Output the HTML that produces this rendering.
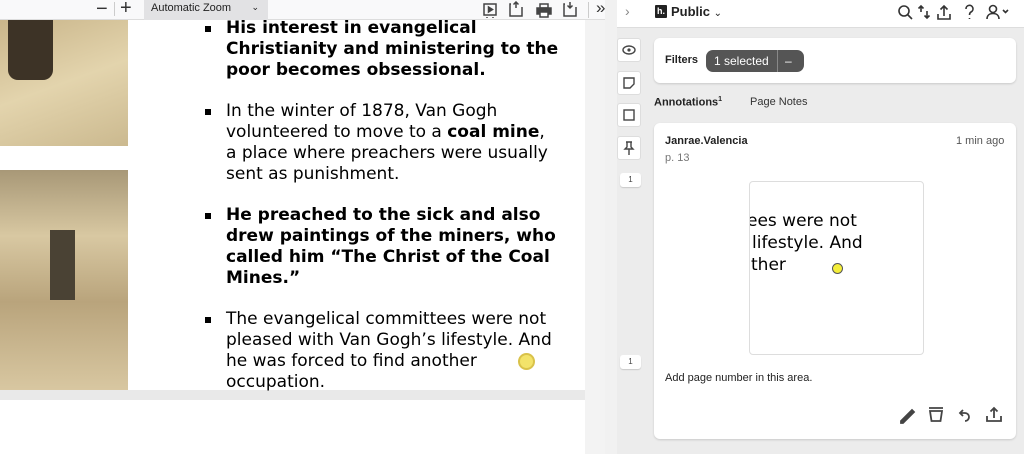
<!DOCTYPE html>
<html><head><style>
*{margin:0;padding:0;box-sizing:border-box}
body{width:1024px;height:454px;overflow:hidden;background:#e9e9e9;font-family:"Liberation Sans",sans-serif;position:relative}
.abs{position:absolute}
.pdf{font-family:"DejaVu Sans",sans-serif;font-size:17px;line-height:21px;color:#000}
.pdf li{list-style:none;position:relative;padding-left:21px;margin-bottom:20px;white-space:nowrap}
.pdf li:before{content:"";position:absolute;left:0;top:8px;width:6px;height:6px;background:#000}
b{font-weight:bold}
.card{background:#fff;border-radius:6px;box-shadow:0 1px 2px rgba(0,0,0,.15)}
.tb{background:#fff;border:1px solid #ddd;border-radius:3px;width:24px;height:24px}
.sn{position:absolute;font-family:'DejaVu Sans',sans-serif;font-size:17px;line-height:22px;color:#000;white-space:nowrap}
</style></head><body>
<div class="abs" style="left:0;top:20px;width:585px;height:370px;background:#fff"></div>
<div class="abs" style="left:0;top:400px;width:585px;height:54px;background:#fff"></div>
<div class="abs" style="left:0;top:20px;width:128px;height:126px;background:linear-gradient(160deg,#c9b58a,#e3d4ad 50%,#cbb98f)"></div>
<div class="abs" style="left:8px;top:20px;width:45px;height:60px;background:#3d3326;border-radius:0 0 10px 10px"></div>
<div class="abs" style="left:0;top:170px;width:128px;height:220px;background:linear-gradient(180deg,#a89877,#d8c8a2 30%,#b9a47c 60%,#d8c7a1)"></div>
<div class="abs" style="left:50px;top:230px;width:25px;height:70px;background:#4a4234"></div>
<ul class="pdf abs" style="left:205px;top:18px;width:370px">
<li><b>His interest in evangelical<br>Christianity and ministering to the<br>poor becomes obsessional.</b></li>
<li>In the winter of 1878, Van Gogh<br>volunteered to move to a <b>coal mine</b>,<br>a place where preachers were usually<br>sent as punishment.</li>
<li><b>He preached to the sick and also<br>drew paintings of the miners, who<br>called him “The Christ of the Coal<br>Mines.”</b></li>
<li>The evangelical committees were not<br>pleased with Van Gogh’s lifestyle. And<br>he was forced to find another<br>occupation.</li>
</ul>
<div class="abs" style="left:518px;top:353px;width:17px;height:17px;border-radius:50%;background:#f3e36a;border:2px solid #d9c24a"></div>
<div class="abs" style="left:0;top:0;width:617px;height:20px;background:#f9f9fa;border-bottom:1px solid #ddd"></div>
<div class="abs" style="left:96px;top:-2px;font-size:20px;color:#333">−</div>
<div class="abs" style="left:114px;top:2px;width:1px;height:14px;background:#ccc"></div>
<div class="abs" style="left:120px;top:-3px;font-size:20px;color:#333">+</div>
<div class="abs" style="left:144px;top:0;width:124px;height:20px;background:#e2e2e4;font-size:11px;color:#222;padding:2px 7px">Automatic Zoom <span style="position:absolute;right:9px;font-size:9px">⌄</span></div>
<svg class="abs" style="left:480px;top:1px" width="100" height="18" viewBox="0 0 100 18" fill="none" stroke="#444" stroke-width="1.5">
<rect x="4" y="3" width="12" height="11"/><path d="M8.5 6l4 2.5-4 2.5z" fill="#444"/><path d="M7 16v1M13 16v1"/>
<path d="M31 3h-1v12h12V6M36 7V1M33.5 3.5L36 1l2.5 2.5"/>
<rect x="57" y="7" width="14" height="6" fill="#444"/><rect x="60" y="3" width="8" height="4"/><rect x="60" y="11" width="8" height="5" fill="#fff"/>
<path d="M85 3h-1v12h12V6M90 1v6M87.5 4.5L90 7l2.5-2.5"/>
</svg>
<div class="abs" style="left:588px;top:2px;width:1px;height:16px;background:#ccc"></div>
<div class="abs" style="left:596px;top:-2px;font-size:17px;color:#333">»</div>
<div class="abs" style="left:585px;top:20px;width:20px;height:434px;background:#f3f3f3"></div>
<div class="abs" style="left:606px;top:87px;width:6px;height:9px;border-radius:3px;background:#bbb"></div>
<div class="abs" style="left:605px;top:0;width:12px;height:454px;background:#f1f1f1"></div>
<div class="abs" style="left:617px;top:0;width:407px;height:454px;background:#ececec"></div>
<div class="abs" style="left:617px;top:0;width:407px;height:28px;background:#fff;border-bottom:1px solid #ddd"></div>
<div class="abs" style="left:625px;top:3px;font-size:14px;color:#888">›</div>
<div class="abs" style="left:655px;top:5px;width:12px;height:13px;background:#222;border-radius:1px;color:#fff;font-size:9px;font-weight:bold;text-align:center;line-height:13px">h.</div>
<div class="abs" style="left:671px;top:4px;font-size:13px;font-weight:bold;color:#222">Public <span style="font-weight:normal;font-size:10px">⌄</span></div>
<svg class="abs" style="left:896px;top:3px" width="128" height="18" viewBox="0 0 128 18" fill="none" stroke="#333" stroke-width="1.6">
<circle cx="8" cy="8" r="5"/><path d="M12 12l4 4"/>
<path d="M25 9V3M22.5 5.5L25 3l2.5 2.5M31 8v7M28.5 12.5L31 15l2.5-2.5"/>
<path d="M48 3v10M44.5 6.5L48 3l3.5 3.5M42 11v5h12v-5"/>
<path d="M70 6a3.5 3.5 0 1 1 5 3c-1.3.7-1.5 1.5-1.5 3M73.5 15v1"/>
<circle cx="97" cy="6" r="3.5"/><path d="M91 16c0-4 3-5.5 6-5.5s6 1.5 6 5.5M107 7l2.5 2.5L112 7"/>
</svg>
<div class="abs tb" style="left:617px;top:38px"><svg width="22" height="22"><ellipse cx="11" cy="11" rx="6" ry="4" fill="none" stroke="#444" stroke-width="1.4"/><circle cx="11" cy="11" r="1.6" fill="#444"/></svg></div>
<div class="abs tb" style="left:617px;top:71px"><svg width="22" height="22"><path d="M6 6h10v6l-4 4H6z" fill="none" stroke="#444" stroke-width="1.4"/></svg></div>
<div class="abs tb" style="left:617px;top:103px"><svg width="22" height="22"><rect x="6" y="6" width="10" height="10" fill="none" stroke="#444" stroke-width="1.4"/></svg></div>
<div class="abs tb" style="left:617px;top:136px"><svg width="22" height="22"><path d="M8 5h6M9 5v5l-2 2h8l-2-2V5M11 12v6" fill="none" stroke="#444" stroke-width="1.4"/></svg></div>
<div class="abs" style="left:620px;top:173px;width:21px;height:14px;background:#fff;border-radius:3px;font-size:8px;text-align:center;line-height:14px;color:#444;box-shadow:0 1px 1px rgba(0,0,0,.15)">1</div>
<div class="abs" style="left:620px;top:355px;width:21px;height:14px;background:#fff;border-radius:3px;font-size:8px;text-align:center;line-height:14px;color:#444;box-shadow:0 1px 1px rgba(0,0,0,.15)">1</div>
<div class="abs card" style="left:654px;top:38px;width:362px;height:45px"></div>
<div class="abs" style="left:665px;top:54px;font-size:11px;font-weight:bold;color:#222">Filters</div>
<div class="abs" style="left:706px;top:50px;width:98px;height:22px;background:#555;border-radius:7px;color:#fff;font-size:12px;line-height:22px;padding-left:8px">1 selected<span style="position:absolute;left:71px;top:0;width:1px;height:22px;background:#888"></span><span style="position:absolute;left:79px">–</span></div>
<div class="abs" style="left:654px;top:96px;font-size:11px;font-weight:bold;color:#222">Annotations<sup style="font-size:7px">1</sup></div>
<div class="abs" style="left:750px;top:96px;font-size:11px;color:#333">Page Notes</div>
<div class="abs card" style="left:654px;top:123px;width:362px;height:316px"></div>
<div class="abs" style="left:665px;top:135px;font-size:11px;font-weight:bold;color:#222">Janrae.Valencia</div>
<div class="abs" style="left:956px;top:135px;font-size:11px;color:#555">1 min ago</div>
<div class="abs" style="left:665px;top:152px;font-size:11px;color:#777">p. 13</div>
<div class="abs" style="left:749px;top:181px;width:175px;height:174px;border:1px solid #ddd;border-radius:4px;overflow:hidden;background:#fff">
<div class="sn" style="left:-3px;top:28px">ees were not</div>
<div class="sn" style="left:2px;top:50px">lifestyle. And</div>
<div class="sn" style="left:1px;top:72px">ther</div>
<div class="abs" style="left:82px;top:81px;width:11px;height:11px;border-radius:50%;background:#f4ee3a;border:1px solid #555"></div>
</div>
<div class="abs" style="left:665px;top:372px;font-size:11px;color:#222">Add page number in this area.</div>
<svg class="abs" style="left:898px;top:405px" width="108" height="20" viewBox="0 0 108 20" fill="none" stroke="#444" stroke-width="1.8">
<path d="M3 16L14 5l2 2L5 18H3z" fill="#444"/>
<path d="M31 3h14M32 6h12l-1.5 10h-9z"/>
<path d="M65 5l-3 3 3 3M62 8h5a4 4 0 0 1 0 8"/>
<path d="M96 3v10M92.5 6.5L96 3l3.5 3.5M89 11v5h14v-5"/>
</svg>
</body></html>
